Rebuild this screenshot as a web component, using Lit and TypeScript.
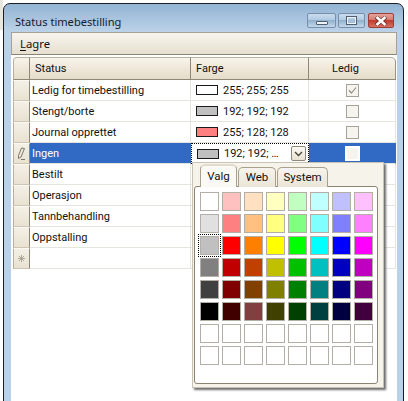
import { LitElement, html, css } from "lit";
import { customElement } from "lit/decorators.js";
import { styleMap } from "lit/directives/style-map.js";

const ROWS: [string, string, string, boolean][] = [
  ["Ledig for timebestilling", "#ffffff", "255; 255; 255", true],
  ["Stengt/borte", "#c0c0c0", "192; 192; 192", false],
  ["Journal opprettet", "#ff8080", "255; 128; 128", false],
  ["Ingen", "#c0c0c0", "192; 192; …", false],
  ["Bestilt", "", "", false],
  ["Operasjon", "", "", false],
  ["Tannbehandling", "", "", false],
  ["Oppstalling", "", "", false],
];

const COLORS = [
  "#ffffff", "#ffc0c0", "#ffe0c0", "#ffffc0", "#c0ffc0", "#c0ffff", "#c0c0ff", "#ffc0ff",
  "#e0e0e0", "#ff8080", "#ffc080", "#ffff80", "#80ff80", "#80ffff", "#8080ff", "#ff80ff",
  "#c0c0c0", "#ff0000", "#ff8000", "#ffff00", "#00ff00", "#00ffff", "#0000ff", "#ff00ff",
  "#808080", "#c00000", "#c04000", "#c0c000", "#00c000", "#00c0c0", "#0000c0", "#c000c0",
  "#404040", "#800000", "#804000", "#808000", "#008000", "#008080", "#000080", "#800080",
  "#000000", "#400000", "#804040", "#404000", "#004000", "#004040", "#000040", "#400040",
  ...Array(16).fill("#ffffff"),
];

@customElement("app-root")
export class AppRoot extends LitElement {
  static styles = css`
    :host {
      display: block;
      width: 408px;
      height: 401px;
      overflow: hidden;
      background: linear-gradient(#e9e6de, #e9e6de) no-repeat 0 0 / 3px 30px, #ffffff;
      font-family: "Noto Sans", "Liberation Sans", sans-serif;
      font-size: 10.6px;
      color: #111;
      box-sizing: border-box;
      padding: 3px 3px 0;
    }
    * { box-sizing: border-box; }
    .window {
      width: 401px;
      height: 420px;
      border: 1px solid #1c1f22;
      border-radius: 7px 7px 0 0;
      padding: 0 6px 0 7px;
      display: flex;
      flex-direction: column;
      background: linear-gradient(180deg, #93b4d4 0, #bcd2e8 28px, #b9d1e9 60px);
    }
    .title {
      height: 28px;
      flex: none;
      display: flex;
      align-items: flex-start;
      justify-content: space-between;
      margin-left: 4px;
    }
    .title-text {
      margin-top: 10px;
      font-size: 11.1px;
      line-height: 15px;
      color: #14202c;
    }
    .buttons { display: flex; margin-top: 9px; margin-right: 3px; }
    .wb {
      width: 29px;
      height: 15px;
      border: 1px solid #7590ad;
      border-radius: 2px;
      background: linear-gradient(180deg, #c9dcee 0, #b2cbe2 45%, #93b1cd 50%, #c3d8ea 100%);
      display: flex;
      align-items: center;
      justify-content: center;
    }
    .wb.max { width: 27px; margin: 0 3px 0 2px; }
    .wb.close {
      width: 26px;
      border-color: #9b3f38;
      background: linear-gradient(180deg, #e2a39b 0, #d77a6f 45%, #bf3c2e 50%, #d8705f 100%);
    }
    .menubar {
      height: 23px;
      flex: none;
      background: linear-gradient(180deg, #f8f5ee 0, #e6dfcf 100%);
      border: 1px solid #a8a193;
      border-bottom-color: #8b8474;
      padding-left: 8px;
      display: flex;
      align-items: center;
      font-size: 11.3px;
    }
    .menubar u { text-underline-offset: 2px; }
    .content {
      flex: 1;
      background: #ffffff;
      padding: 2px 1px 0 2px;
    }
    .grid {
      position: relative;
      width: 383px;
      font-family: Roboto, "Noto Sans", sans-serif;
      font-size: 11px;
    }
    .row {
      display: grid;
      grid-template-columns: 17px 161px 118px 87px;
      height: 21px;
    }
    .row.head { height: 23px; }
    .rh {
      background: linear-gradient(180deg, #f4f0e6 0, #e9e2d2 100%);
      border: 1px solid #cdc6b5;
      border-top-color: #faf8f2;
      border-right-color: #8f8878;
      border-left-color: #b7b0a0;
      display: flex;
      align-items: center;
      justify-content: center;
    }
    .head > div {
      background: linear-gradient(180deg, #f8f4ea 0, #e5dcc9 100%);
      border-top: 1px solid #b9b1a0;
      border-bottom: 1px solid #8f8878;
      border-right: 1px solid #8f8878;
      display: flex;
      align-items: center;
      padding-left: 5px;
    }
    .head > div:first-child {
      border-left: 1px solid #b7b0a0;
      border-radius: 4px 0 0 0;
    }
    .head > div:last-child {
      border-radius: 0 5px 0 0;
      justify-content: center;
      padding: 0 13px 0 0;
      border-right-color: #9a9383;
    }
    .cell {
      border-bottom: 1px solid #e6e4df;
      border-right: 1px solid #e6e4df;
      display: flex;
      align-items: center;
      padding-left: 2px;
      white-space: nowrap;
    }
    .col-farge { padding-left: 5px; gap: 5px; }
    .col-ledig { justify-content: center; padding: 0; }
    .sw {
      width: 22px;
      height: 10px;
      border: 1px solid #1b1b1b;
      flex: none;
    }
    .cb {
      width: 13px;
      height: 13px;
      border: 1px solid #a7a298;
      background: #f6f4ef;
      display: flex;
      align-items: center;
      justify-content: center;
    }
    .row.sel .col-status, .row.sel .col-ledig {
      background: #316ac5;
      color: #fff;
      border-color: #316ac5;
      border-bottom-color: #e6e4df;
    }
    .row.sel .cb {
      width: 15px;
      height: 15px;
      border: 2px solid #ffffff;
      background: #f6f4ef;
    }
    .row.sel .col-farge {
      border: 1px dotted #000;
      background: #fff;
      position: relative;
    }
    .ddb {
      position: absolute;
      right: 2px;
      top: 2px;
      width: 15px;
      height: 15px;
      border: 1px solid #8f8878;
      border-radius: 2px;
      background: linear-gradient(180deg, #fbf9f4, #e9e2d2);
      display: flex;
      align-items: center;
      justify-content: center;
    }
    .popup {
      position: absolute;
      left: 179px;
      top: 105px;
      width: 192px;
      height: 226px;
      background: #f6f3ea;
      border: 1px solid #c9c3b5;
      box-shadow: 2px 2px 2px rgba(60, 60, 60, 0.75);
      padding: 2px 5px 3px 1px;
      display: flex;
      flex-direction: column;
    }
    .tabs {
      height: 22px;
      display: flex;
      align-items: flex-end;
      gap: 1px;
      padding-left: 6px;
      position: relative;
      z-index: 1;
      margin-bottom: -1px;
      flex: none;
      font-size: 11.5px;
    }
    .tab {
      height: 20px;
      border: 1px solid #a89f8c;
      border-bottom: none;
      border-radius: 5px 5px 0 0;
      background: linear-gradient(180deg, #f7f4ec, #ebe5d7);
      display: flex;
      align-items: center;
      justify-content: center;
      padding-bottom: 1px;
    }
    .tab.on {
      height: 23px;
      background: #fbf9f4;
      border-top: 2px solid #e2dccd;
      padding-bottom: 2px;
    }
    .panel {
      flex: 1;
      background: #fff;
      border: 1px solid #8c8473;
      border-radius: 3px;
      padding: 5px;
      display: grid;
      grid-template-columns: repeat(8, 19px);
      grid-auto-rows: 19px;
      gap: 3px;
    }
    .c {
      border: 1px solid #b3aea6;
      position: relative;
    }
    .c.on::after {
      content: "";
      position: absolute;
      inset: -3px;
      border: 1px dotted #000;
    }
  `;

  private win(kind: string) {
    if (kind === "min")
      return html`<svg width="12" height="8" viewBox="0 0 12 8"><rect x="0.5" y="4.5" width="11" height="3" rx="0.5" fill="#eef3f8" stroke="#4e5e70"/></svg>`;
    if (kind === "max")
      return html`<svg width="11" height="9" viewBox="0 0 11 9"><rect x="0.5" y="0.5" width="10" height="8" fill="none" stroke="#4e5e70"/><rect x="1.5" y="1.5" width="8" height="6" fill="none" stroke="#eef3f8"/><rect x="3" y="3" width="5" height="3" fill="#a9c2da"/></svg>`;
    return html`<svg width="14" height="10" viewBox="0 0 14 10"><path d="M2 1 L12 9 M12 1 L2 9" stroke="#6b2a24" stroke-width="4"/><path d="M2.5 1 L11.5 9 M11.5 1 L2.5 9" stroke="#ffffff" stroke-width="2.6"/></svg>`;
  }

  render() {
    return html`
      <div class="window">
        <div class="title">
          <span class="title-text">Status timebestilling</span>
          <div class="buttons">
            <div class="wb">${this.win("min")}</div>
            <div class="wb max">${this.win("max")}</div>
            <div class="wb close">${this.win("close")}</div>
          </div>
        </div>
        <div class="menubar"><span><u>L</u>agre</span></div>
        <div class="content">
          <div class="grid">
            <div class="row head">
              <div></div><div>Status</div><div>Farge</div><div>Ledig</div>
            </div>
            ${ROWS.map(([name, col, txt, checked], i) => html`
              <div class="row ${i === 3 ? "sel" : ""}">
                <div class="rh">
                  ${i === 3
                    ? html`<svg width="9" height="13" viewBox="0 0 9 13"><path d="M4.5 1 L7.5 1.5 L4 10 L1.5 11.5 L1.5 8.5 Z" fill="#efe9d9" stroke="#7d7767"/><path d="M4 12.5 H8" stroke="#7d7767"/></svg>`
                    : ""}
                </div>
                <div class="cell col-status">${name}</div>
                <div class="cell col-farge">
                  ${col ? html`<span class="sw" style=${styleMap({ background: col })}></span><span>${txt}</span>` : ""}
                  ${i === 3
                    ? html`<span class="ddb"><svg width="9" height="6" viewBox="0 0 9 6"><path d="M1 1 L4.5 4.5 L8 1" fill="none" stroke="#4b4638" stroke-width="1.4"/></svg></span>`
                    : ""}
                </div>
                <div class="cell col-ledig">
                  ${i < 4
                    ? html`<span class="cb">${checked
                        ? html`<svg width="9" height="9" viewBox="0 0 9 9"><path d="M1 4.5 L3.5 7 L8 1.5" fill="none" stroke="#8a8578" stroke-width="1.1"/></svg>`
                        : ""}</span>`
                    : ""}
                </div>
              </div>
            `)}
            <div class="row">
              <div class="rh">
                <svg width="7" height="7" viewBox="0 0 7 7"><path d="M3.5 0 V7 M0 3.5 H7 M1 1 L6 6 M6 1 L1 6" stroke="#a8a394" stroke-width="0.9"/></svg>
              </div>
              <div class="cell"></div><div class="cell"></div><div class="cell"></div>
            </div>
            <div class="popup">
              <div class="tabs">
                <div class="tab on" style="width:37px">Valg</div>
                <div class="tab" style="width:38px">Web</div>
                <div class="tab" style="width:51px">System</div>
              </div>
              <div class="panel">
                ${COLORS.map((c, i) => html`<div class="c ${i === 16 ? "on" : ""}" style=${styleMap({ background: c })}></div>`)}
              </div>
            </div>
          </div>
        </div>
      </div>
    `;
  }
}
